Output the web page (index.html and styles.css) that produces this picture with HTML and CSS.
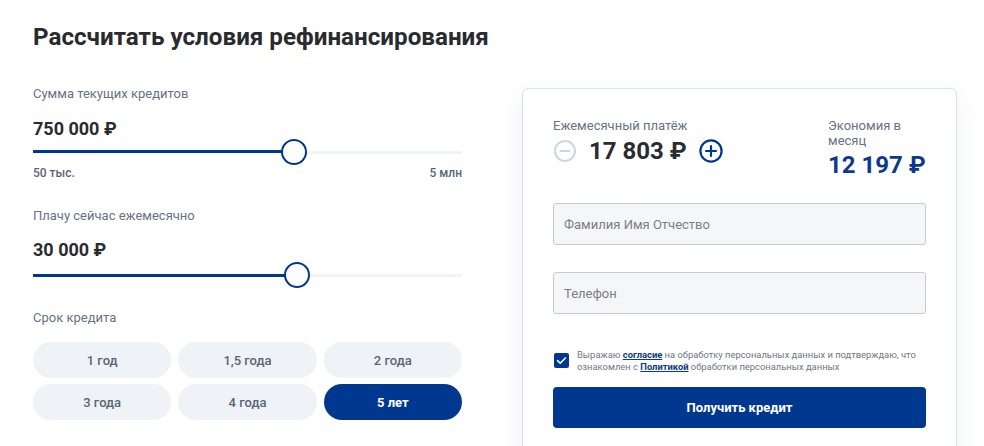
FILE: index.html
```html
<!DOCTYPE html>
<html lang="ru">
<head>
<meta charset="utf-8">
<title>Рефинансирование</title>
<link rel="stylesheet" href="styles.css">
</head>
<body>
<div class="page">
  <h1 class="title">Рассчитать условия рефинансирования</h1>
  <div class="layout">
    <div class="calc">
      <div class="field field-first">
        <div class="label">Сумма текущих кредитов</div>
        <div class="value">750 000 ₽</div>
        <div class="slider">
          <div class="track"></div>
          <div class="fill" style="width: 261px"></div>
          <div class="thumb" style="left: 248px"></div>
        </div>
        <div class="scale"><span>50 тыс.</span><span>5 млн</span></div>
      </div>
      <div class="field field-second">
        <div class="label">Плачу сейчас ежемесячно</div>
        <div class="value">30 000 ₽</div>
        <div class="slider slider-second">
          <div class="track"></div>
          <div class="fill" style="width: 264px"></div>
          <div class="thumb" style="left: 251px"></div>
        </div>
      </div>
      <div class="field field-term">
        <div class="label">Срок кредита</div>
        <div class="terms">
          <button class="term">1 год</button>
          <button class="term">1,5 года</button>
          <button class="term">2 года</button>
          <button class="term">3 года</button>
          <button class="term">4 года</button>
          <button class="term term-active">5 лет</button>
        </div>
      </div>
    </div>
    <div class="card">
      <div class="summary">
        <div class="pay">
          <div class="label">Ежемесячный платёж</div>
          <div class="pay-row">
            <svg class="icon icon-minus" width="22" height="22" viewBox="0 0 22 22">
              <circle cx="11" cy="11" r="10" fill="none" stroke="#cdd7e1" stroke-width="2"/>
              <path d="M6.5 11h9" stroke="#cdd7e1" stroke-width="2" stroke-linecap="round"/>
            </svg>
            <span class="pay-amount">17 803 ₽</span>
            <svg class="icon icon-plus" width="24" height="24" viewBox="0 0 24 24">
              <circle cx="12" cy="12" r="10.6" fill="none" stroke="#00388f" stroke-width="2.2"/>
              <path d="M7 12h10M12 7v10" stroke="#00388f" stroke-width="2.2" stroke-linecap="round"/>
            </svg>
          </div>
        </div>
        <div class="econ">
          <div class="label econ-label">Экономия в месяц</div>
          <div class="econ-amount">12 197 ₽</div>
        </div>
      </div>
      <div class="inputs">
        <input class="input" type="text" placeholder="Фамилия Имя Отчество">
        <input class="input" type="text" placeholder="Телефон">
      </div>
      <div class="consent">
        <span class="checkbox">
          <svg width="15" height="15" viewBox="0 0 15 15">
            <rect width="15" height="15" rx="2" fill="#00388f"/>
            <path d="M3.6 7.6l2.6 2.6 5.2-5.2" fill="none" stroke="#fff" stroke-width="1.6" stroke-linecap="round" stroke-linejoin="round"/>
          </svg>
        </span>
        <p class="consent-text">Выражаю <a href="#">согласие</a> на обработку персональных данных и подтверждаю, что ознакомлен с <a href="#">Политикой</a> обработки персональных данных</p>
      </div>
      <button class="submit">Получить кредит</button>
    </div>
  </div>
</div>
</body>
</html>
```
FILE: styles.css
```css
* { box-sizing: border-box; }
html, body { margin: 0; padding: 0; background: #fff; }
body {
  font-family: Roboto, "Noto Sans", "Liberation Sans", sans-serif;
  color: #2a2c31;
  overflow: hidden;
}
.page { padding: 22px 0 0 33px; }
.title {
  margin: 0;
  font-size: 24.2px;
  line-height: 30px;
  font-weight: 700;
  color: #2a2b2e;
}
.layout {
  display: flex;
  align-items: flex-start;
  gap: 60px;
  margin-top: 34px;
}
.calc { width: 429px; }
.label {
  font-size: 13px;
  line-height: 16px;
  color: #667285;
}
.value {
  margin-top: 15.7px;
  font-size: 18px;
  line-height: 22px;
  font-weight: 700;
  color: #2a2c31;
}
.slider {
  position: relative;
  height: 26px;
}
.field-first .slider { margin-top: -1px; }
.slider-second { margin-top: 1px; }
.track {
  position: absolute;
  left: 0; right: 0; top: 12px;
  height: 3px;
  background: #f2f3f6;
}
.fill {
  position: absolute;
  left: 0; top: 11.5px;
  height: 3px;
  background: #00388f;
}
.thumb {
  position: absolute;
  top: 0;
  width: 26px;
  height: 26px;
  border-radius: 50%;
  border: 2px solid #00388f;
  background: #fff;
}
.scale {
  display: flex;
  justify-content: space-between;
  margin-top: 1px;
  font-size: 12px;
  line-height: 14px;
  font-weight: 500;
  color: #5a6576;
}
.field-second { margin-top: 28px; }
.field-term { margin-top: 22px; }
.terms {
  margin-top: 16px;
  display: grid;
  grid-template-columns: repeat(3, 1fr);
  column-gap: 7px;
  row-gap: 6px;
}
.term {
  height: 36px;
  border: 0;
  border-radius: 18px;
  background: #eff2f7;
  font-family: inherit;
  font-size: 13px;
  font-weight: 500;
  color: #5a6576;
  padding: 0;
}
.term-active {
  background: #00388f;
  color: #fff;
  font-weight: 700;
}
.card {
  width: 435px;
  margin-top: 2px;
  height: 400px;
  border: 1px solid #d9e1ea;
  border-radius: 6px;
  box-shadow: 0 6px 24px rgba(40, 60, 100, 0.07);
  padding: 29px 30px 20px 30px;
}
.summary {
  display: flex;
  justify-content: space-between;
}
.pay-row {
  display: flex;
  align-items: center;
  margin-top: 3px;
  height: 28px;
}
.icon { display: block; flex: none; }
.icon-minus { margin-left: 1px; }
.pay-amount {
  margin-left: 13px;
  margin-right: 12px;
  font-size: 24px;
  line-height: 28px;
  font-weight: 700;
  color: #2a2c31;
}
.econ { width: 98px; }
.econ-label { line-height: 15px; width: 80px; }
.econ-amount {
  margin-top: 3px;
  font-size: 24px;
  line-height: 28px;
  font-weight: 700;
  color: #0d398c;
  white-space: nowrap;
}
.inputs {
  margin-top: 24px;
  display: flex;
  flex-direction: column;
  gap: 27px;
}
.input {
  display: block;
  width: 100%;
  height: 42px;
  border: 1px solid #c7c9cc;
  border-radius: 3px;
  background: #f5f6f8;
  padding: 0 10px;
  font-family: inherit;
  font-size: 13px;
  color: #2a2c31;
  outline: none;
}
.input::placeholder { color: #7b7e84; }
.consent {
  margin-top: 35px;
  display: flex;
  align-items: flex-start;
  gap: 8px;
}
.checkbox { flex: none; display: block; margin-top: 4px; margin-left: 1px; }
.checkbox svg { display: block; }
.consent-text {
  margin: 0;
  font-size: 9.4px;
  line-height: 12px;
  color: #6f7684;
}
.consent-text a {
  color: #0d398c;
  font-weight: 700;
  text-decoration: underline;
}
.submit {
  margin-top: 14px;
  display: block;
  width: 100%;
  height: 41px;
  border: 0;
  border-radius: 4px;
  background: #00388f;
  color: #fff;
  font-family: inherit;
  font-size: 13px;
  font-weight: 700;
}
```
